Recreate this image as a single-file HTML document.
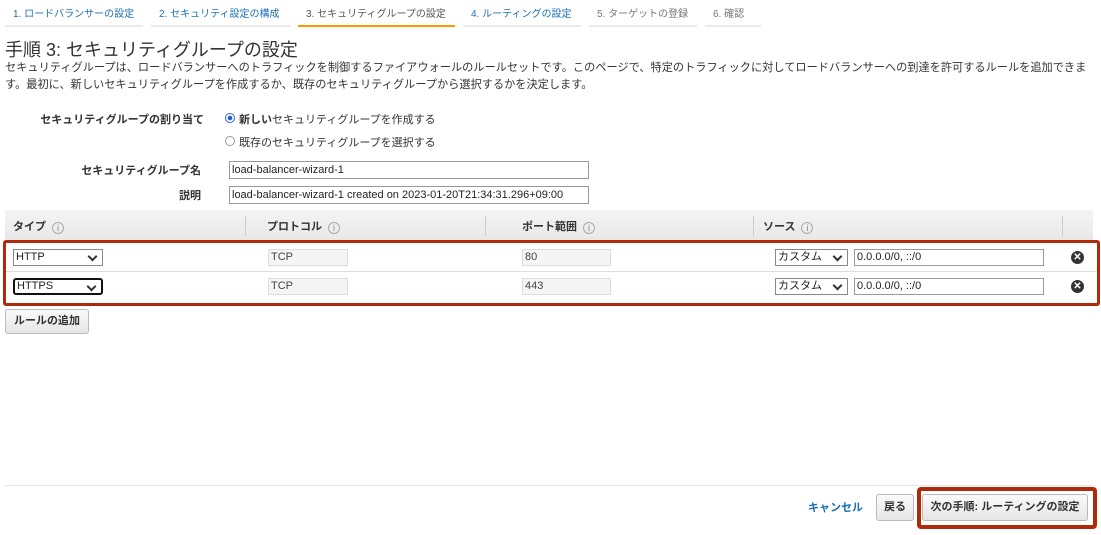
<!DOCTYPE html>
<html><head><meta charset="utf-8"><style>
*{box-sizing:border-box;margin:0;padding:0}
body{width:1101px;height:535px;background:#fff;font-family:"Liberation Sans","Noto Sans CJK JP",sans-serif;font-size:12px;color:#333;position:relative;overflow:hidden}
.a{position:absolute;white-space:nowrap}
.tab{position:absolute;top:5px;height:22px;border-bottom:2px solid #eaeaea;font-size:10px;color:#1a6fb5;padding-left:8px;line-height:20px;white-space:nowrap}
.gray{color:#777}
.inp{position:absolute;border:1px solid #999;background:#fff;font-size:11px;padding-left:2px;line-height:16px;height:18px;color:#222;white-space:nowrap}
.ro{position:absolute;border:1px solid #ddd;background:#f5f5f5;font-size:11px;padding-left:2px;line-height:15px;height:17px;color:#444}
.sel{position:absolute;border:1px solid #888;background:#fff;font-size:11px;padding-left:2px;line-height:14px;height:17px;color:#222;white-space:nowrap}
.sel:after{content:"";position:absolute;right:6px;top:3px;width:5px;height:5px;border-right:2px solid #333;border-bottom:2px solid #333;transform:rotate(45deg)}
.btn{position:absolute;border:1px solid #bbb;border-radius:3px;background:linear-gradient(#fafafa,#e6e6e6);font-weight:bold;font-size:11px;text-align:center;color:#333;white-space:nowrap}
.i{display:inline-block;width:12px;height:12px;border:1px solid #aaa;border-radius:50%;font-size:9px;text-align:center;line-height:10px;color:#888;font-weight:normal;margin-left:6px;vertical-align:-1px}
.hd{position:absolute;top:218px;font-weight:bold;font-size:11px;color:#333;white-space:nowrap}
.sep{position:absolute;top:216px;width:1px;height:20px;background:#ccc}
.x{position:absolute;width:13px;height:13px;border-radius:50%;background:#333;color:#fff;font-size:10px;line-height:13px;text-align:center;font-weight:bold}
</style></head><body>
<div class="tab" style="left:5px;width:138px">1. ロードバランサーの設定</div>
<div class="tab" style="left:151px;width:139px">2. セキュリティ設定の構成</div>
<div class="tab gray" style="left:298px;width:157px;border-bottom-color:#f90;color:#555">3. セキュリティグループの設定</div>
<div class="tab" style="left:463px;width:118px">4. ルーティングの設定</div>
<div class="tab gray" style="left:589px;width:108px">5. ターゲットの登録</div>
<div class="tab gray" style="left:705px;width:56px">6. 確認</div>

<div class="a" style="left:5px;top:36px;font-size:18px;color:#333">手順 3: セキュリティグループの設定</div>
<div class="a" style="left:5px;top:60px;font-size:11.2px;line-height:17px">セキュリティグループは、ロードバランサーへのトラフィックを制御するファイアウォールのルールセットです。このページで、特定のトラフィックに対してロードバランサーへの到達を許可するルールを追加できま<br>す。最初に、新しいセキュリティグループを作成するか、既存のセキュリティグループから選択するかを決定します。</div>

<div class="a" style="right:897px;top:111px;font-weight:bold;font-size:11px">セキュリティグループの割り当て</div>
<div class="a" style="left:225px;top:113px;width:10px;height:10px;border-radius:50%;border:1px solid #36c;background:radial-gradient(#1a5fd0 35%,#fff 45%)"></div>
<div class="a" style="left:239px;top:111px;font-size:11px"><b>新しい</b>セキュリティグループを作成する</div>
<div class="a" style="left:225px;top:136px;width:10px;height:10px;border-radius:50%;border:1px solid #999"></div>
<div class="a" style="left:239px;top:134px;font-size:11px">既存のセキュリティグループを選択する</div>
<div class="a" style="right:900px;top:162px;font-weight:bold;font-size:11px">セキュリティグループ名</div>
<div class="inp" style="left:229px;top:161px;width:360px">load-balancer-wizard-1</div>
<div class="a" style="right:900px;top:187px;font-weight:bold;font-size:11px">説明</div>
<div class="inp" style="left:229px;top:186px;width:360px">load-balancer-wizard-1 created on 2023-01-20T21:34:31.296+09:00</div>

<div class="a" style="left:5px;top:210px;width:1088px;height:31px;background:linear-gradient(#f4f4f4,#e8e8e8)"></div>
<div class="hd" style="left:13px">タイプ<span class="i">i</span></div>
<div class="sep" style="left:245px"></div>
<div class="hd" style="left:267px">プロトコル<span class="i">i</span></div>
<div class="sep" style="left:485px"></div>
<div class="hd" style="left:522px">ポート範囲<span class="i">i</span></div>
<div class="sep" style="left:753px"></div>
<div class="hd" style="left:763px">ソース<span class="i">i</span></div>
<div class="sep" style="left:1062px"></div>

<div class="a" style="left:3px;top:240px;width:1097px;height:66px;border:3px solid #b02a0a;border-radius:3px"></div>
<div class="a" style="left:6px;top:271px;width:1091px;height:1px;background:#ddd"></div>

<div class="sel" style="left:13px;top:249px;width:90px">HTTP</div>
<div class="ro" style="left:268px;top:249px;width:80px">TCP</div>
<div class="ro" style="left:522px;top:249px;width:89px">80</div>
<div class="sel" style="left:775px;top:249px;width:73px">カスタム</div>
<div class="inp" style="left:854px;top:249px;width:190px;height:17px;line-height:15px">0.0.0.0/0, ::/0</div>
<div class="x" style="left:1071px;top:251px">✕</div>

<div class="sel" style="left:13px;top:278px;width:90px;border:2px solid #111;border-radius:3px;line-height:13px">HTTPS</div>
<div class="ro" style="left:268px;top:278px;width:80px">TCP</div>
<div class="ro" style="left:522px;top:278px;width:89px">443</div>
<div class="sel" style="left:775px;top:278px;width:73px">カスタム</div>
<div class="inp" style="left:854px;top:278px;width:190px;height:17px;line-height:15px">0.0.0.0/0, ::/0</div>
<div class="x" style="left:1071px;top:280px">✕</div>

<div class="btn" style="left:5px;top:309px;width:84px;height:25px;line-height:23px">ルールの追加</div>

<div class="a" style="left:5px;top:485px;width:1088px;height:1px;background:#e6e6e6"></div>
<div class="a" style="left:808px;top:499px;font-weight:bold;font-size:11px;color:#1a6fb5">キャンセル</div>
<div class="btn" style="left:876px;top:494px;width:38px;height:27px;line-height:25px">戻る</div>
<div class="a" style="left:917px;top:487px;width:180px;height:42px;border:4px solid #b02a0a;border-radius:4px"></div>
<div class="btn" style="left:922px;top:494px;width:166px;height:27px;line-height:25px">次の手順: ルーティングの設定</div>
</body></html>
